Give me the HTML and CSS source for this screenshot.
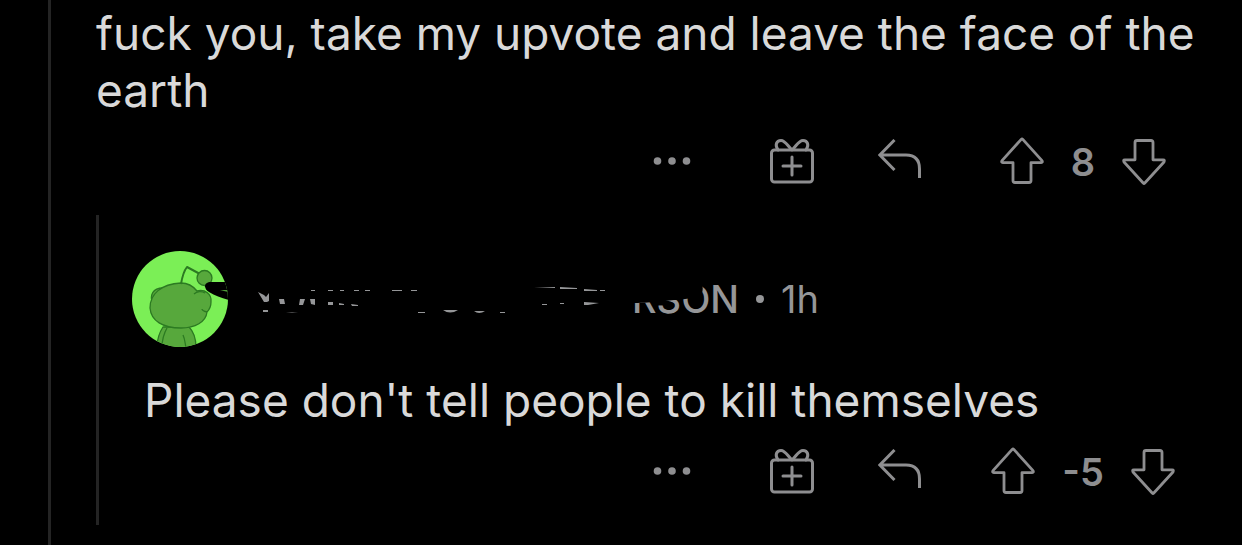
FILE: index.html
```html
<!DOCTYPE html>
<html lang="en">
<head>
  <meta charset="UTF-8">
  <meta name="viewport" content="width=device-width, initial-scale=1.0">
  <title>Comments</title>
  <link rel="stylesheet" href="styles.css">
</head>
<body>
  <!-- Shared icons -->
  <svg class="sprite" aria-hidden="true">
    <symbol id="icon-more" viewBox="0 0 56 46">
      <g fill="currentColor">
        <circle cx="7.5" cy="22" r="3.8"/>
        <circle cx="22" cy="22" r="3.8"/>
        <circle cx="36.5" cy="22" r="3.8"/>
      </g>
    </symbol>
    <symbol id="icon-gift" viewBox="0 0 44 46">
      <g fill="none" stroke="currentColor" stroke-width="3" stroke-linecap="round" stroke-linejoin="round">
        <rect x="1.5" y="11" width="41" height="32" rx="3"/>
        <path d="M22 18v18M13 27h18"/>
        <path d="M8 11C4.5 6 6.5 1.5 11 1.5C15.5 1.5 17.500 7 22 11C26.5 7 28.5 1.5 33 1.5C37.5 1.5 39.5 6 36 11"/>
      </g>
    </symbol>
    <symbol id="icon-reply" viewBox="0 0 44 46">
      <path d="M16.5 1L1.8 16L16.5 31M1.8 16H28C37 16 41.500 21 41.5 30V39" fill="none" stroke="currentColor" stroke-width="3"/>
    </symbol>
    <symbol id="icon-up" viewBox="0 0 44 46" overflow="visible">
      <path d="M21.2 0.4Q22 -0.4 22.8 0.4L42 21.600Q43 23.6 41.200 23.600H31V41.500Q31 43.500 29 43.500H15Q13 43.500 13 41.500V23.600H2.800Q1 23.600 2 21.600Z" fill="none" stroke="currentColor" stroke-width="2.8" stroke-linejoin="round"/>
    </symbol>
    <symbol id="icon-down" viewBox="0 0 44 46" overflow="visible">
      <path d="M21.2 44Q22 44.800 22.8 44L42 23Q43 20.800 41.200 20.800H31V3.500Q31 1.500 29 1.500H15Q13 1.500 13 3.500V20.800H2.800Q1 20.800 2 23Z" fill="none" stroke="currentColor" stroke-width="2.8" stroke-linejoin="round"/>
    </symbol>
  </svg>

  <main class="thread">
    <article class="comment">
      <p class="comment-text">fuck you, take my upvote and leave the face of the earth</p>
      <div class="actions">
        <button type="button" aria-label="More"><svg class="icon icon-wide"><use href="#icon-more"/></svg></button>
        <button type="button" aria-label="Give award"><svg class="icon"><use href="#icon-gift"/></svg></button>
        <button type="button" aria-label="Reply"><svg class="icon"><use href="#icon-reply"/></svg></button>
        <div class="votes">
          <button type="button" aria-label="Upvote"><svg class="icon"><use href="#icon-up"/></svg></button>
          <span class="score">8</span>
          <button type="button" aria-label="Downvote"><svg class="icon"><use href="#icon-down"/></svg></button>
        </div>
      </div>

      <article class="comment reply">
        <header class="comment-header">
          <svg class="avatar" viewBox="0 0 96 96" aria-hidden="true">
            <clipPath id="avatar-clip"><circle cx="48" cy="48" r="48"/></clipPath>
            <g clip-path="url(#avatar-clip)">
              <rect width="96" height="96" fill="#7bef56"/>
              <g fill="#57a83c" stroke="#2c7a22" stroke-width="1.3" stroke-linejoin="round">
                <path d="M31 76C27 82 25 88 25 97H64C64 88 62 81 57 76Z"/>
                <path d="M35 77C31 84 30 90 30 97M51 84C53 88 53 92 54 97" fill="none"/>
                <path d="M21 53C17 44 21 37 31 37L34 46Z"/>
                <path d="M49 32C56 32 61 35 65 40C73 38 80 43 79 51C79 56 77 59 75 61C74 71 63 77 49 77C31 77 19 70 18 57C18 43 29 33 49 32Z"/>
                <path d="M62 43C65 40 70 40 73 42M75 61C71 60 70 59 70 58" fill="none"/>
                <path d="M49 33C50 27 51 21 55 16L68 23" fill="none" stroke-width="2"/>
                <circle cx="72.5" cy="27" r="7.5"/>
              </g>
              <path d="M97 31H79C72 31 71 37 77 41C83 45 90 47 97 49Z" fill="#000"/>
              <path d="M88 39L96 41L95 39Z" fill="#4f9a38"/>
            </g>
          </svg>
          <div class="byline">
            <span class="author">
              <!-- Scraps that show through the marker strokes -->
              <svg class="scraps" viewBox="0 0 374 46" aria-hidden="true">
                <g fill="currentColor">
                  <path d="M0 16L6 19L8 21L11 17V25L9 26L6 26ZM5 34H10V36H5ZM21 23H26L27 28H22ZM42 23H47L45 29H41ZM52 23H57V29L53 28ZM70 26H75V29H70ZM81 27L86 28V29L81 29ZM93 28L100 29V30H94Z"/>
                  <path d="M53 14H57V15H53ZM70 14H75V15H70ZM82 14H86V15H82ZM96 14L101 14V15H96ZM107 14L112 14V15H107ZM134 14H144V15H134ZM153 14H159V15H153Z"/>
                  <path d="M28 36Q34 38 40 36Q34 37 28 36ZM160 36H167V37H160ZM185 34H200Q192 39 185 34ZM216 35H227Q221 39 216 35ZM242 36H247V37H242Z"/>
                  <path d="M276 12L297 11V12H276ZM302 11L319 12V13H302ZM326 13L339 14V15H326ZM342 14H347V15H342ZM302 27H306V28H302ZM326 26L341 27L330 29H326ZM284 28H289V29H284Z"/>
                </g>
              </svg>
              <span class="author-name">RSON</span>
              <svg class="marker" viewBox="0 0 90 30" aria-hidden="true">
                <path d="M0 0H67C72 3 74 7 72 13C64 18 54 20 44 20C31 21 22 23 0 23Z" fill="#000"/>
              </svg>
            </span>
            <span class="dot"></span>
            <time>1h</time>
          </div>
        </header>
        <p class="comment-text">Please don't tell people to kill themselves</p>
        <div class="actions">
          <button type="button" aria-label="More"><svg class="icon icon-wide"><use href="#icon-more"/></svg></button>
          <button type="button" aria-label="Give award"><svg class="icon"><use href="#icon-gift"/></svg></button>
          <button type="button" aria-label="Reply"><svg class="icon"><use href="#icon-reply"/></svg></button>
          <div class="votes">
            <button type="button" aria-label="Upvote"><svg class="icon"><use href="#icon-up"/></svg></button>
            <span class="score">-5</span>
            <button type="button" aria-label="Downvote"><svg class="icon"><use href="#icon-down"/></svg></button>
          </div>
        </div>
      </article>
    </article>
  </main>
</body>
</html>
```
FILE: styles.css
```css
* {
  box-sizing: border-box;
}

body {
  margin: 0;
  background-color: #000;
  color: #d9d9d9;
  font-family: Inter, "Liberation Sans", sans-serif;
}

.sprite {
  display: none;
}

.thread {
  display: flex;
  min-height: 100vh;
  padding-left: 48px;
}

.comment {
  flex: 1;
  padding: 5px 0 20px 45px;
  border-left: 3px solid #242424;
}

.comment-text {
  margin: 0;
  padding-right: 36px;
  font-size: 46px;
  line-height: 57px;
}

.reply {
  margin-top: 30px;
  padding: 36px 0 30px 33px;
}

.reply .comment-text {
  margin-top: 25px;
  padding-left: 12px;
}

.comment-header {
  display: flex;
  align-items: center;
  gap: 30px;
}

.avatar {
  width: 96px;
  height: 96px;
}

.byline {
  display: flex;
  align-items: center;
  gap: 17px;
  color: #959698;
  font-size: 38px;
  line-height: 46px;
}

.author {
  position: relative;
  display: flex;
  font-weight: 500;
}

.scraps {
  width: 374px;
  height: 46px;
}

/* Marker stroke drawn over the end of the name */
.marker {
  position: absolute;
  top: 4px;
  left: 372px;
  width: 90px;
  height: 30px;
}

.dot {
  width: 8px;
  height: 8px;
  border-radius: 50%;
  background-color: #959698;
}

.actions {
  display: flex;
  justify-content: flex-end;
  gap: 64px;
  margin-top: 20px;
  padding-right: 62px;
  color: #8e8e90;
}

.actions button {
  display: flex;
  padding: 0;
  border: 0;
  background: none;
  color: inherit;
  cursor: pointer;
}

.icon {
  width: 44px;
  height: 46px;
  overflow: visible;
}

.icon-wide {
  width: 56px;
}

.votes {
  display: flex;
  align-items: center;
  justify-content: center;
  gap: 27px;
  width: 194px;
}

.score {
  font-size: 38px;
  font-weight: 600;
  line-height: 46px;
}
```
